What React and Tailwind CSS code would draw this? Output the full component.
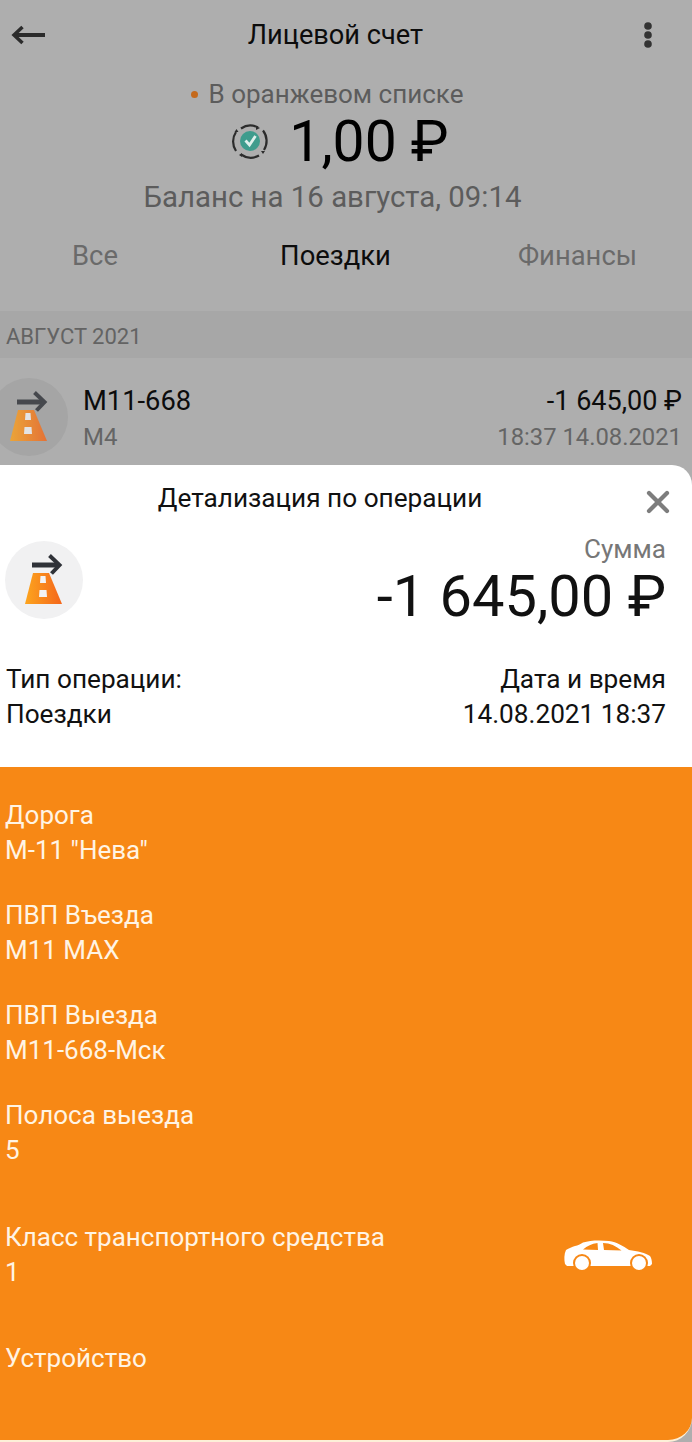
import { X } from 'lucide-react';

function RoadIcon({ id, className }) {
  return (
    <svg viewBox="0 0 78 78" className={className}>
      <defs>
        <linearGradient id={id} x1="0" y1="0" x2="1" y2="0">
          <stop offset="0" stopColor="#fda51e" />
          <stop offset="1" stopColor="#f4661b" />
        </linearGradient>
      </defs>
      <path d="M28 32h16l13 31H20z" fill={`url(#${id})`} />
      <path d="M35.500 35h5l.5 7h-6zM34.500 49h7l.5 7h-8z" fill="#f3f3f4" />
      <path d="M27 24h27" stroke="#2f3238" strokeWidth="5" fill="none" />
      <path d="M44.500 14.500 54.500 24 46.500 32.500" stroke="#2f3238" strokeWidth="4" fill="none" />
    </svg>
  );
}

function CycleCheckIcon() {
  return (
    <svg viewBox="0 0 40 40" className="w-[40px] h-[40px]">
      <g stroke="#2c2c2c" strokeWidth="2.200" fill="none">
        <path d="M11 7.500A16 16 0 0 1 28 6.500" />
        <path d="M33 9.500A17 17 0 0 1 34 29" />
        <path d="M29 34.500A17 17 0 0 1 11 33.500" />
        <path d="M6 30A17 17 0 0 1 6 11" />
      </g>
      <path d="M26 5l4 2-4 2zM35 30l-2 3-2-3zM12 32v4l-3-2zM4.500 11l2-3 2 3z" fill="#2c2c2c" />
      <circle cx="20" cy="20" r="10" fill="#3f9c8d" />
      <path d="M15.500 19.500l4 4.500 6-9" stroke="#dff0ec" strokeWidth="2.800" fill="none" />
    </svg>
  );
}

function CarIcon() {
  return (
    <svg viewBox="0 0 90 30" className="w-[90px] h-[30px]">
      <path
        fill="#fff"
        fillRule="evenodd"
        d="M2 24c-1-4-1-10 1-14 3-2 6-3 9-4 3-.5 5-1.500 8-3.500 7-2.500 18-2.500 26-1.500 8 1 14 5 20 9 8 1 17 3 21 6 1.500 2 2 5 2 8l-2 2H4zM20 9.500l15 .5-.5-7c-6 .5-10 3-14.500 6.500zM40 3l1 7 17.500 .5C53 6 47 3 40 3z"
      />
      <circle cx="19" cy="23" r="9" fill="#f78815" />
      <circle cx="76" cy="23" r="9" fill="#f78815" />
      <circle cx="19" cy="23" r="7" fill="#fff" />
      <circle cx="76" cy="23" r="7" fill="#fff" />
    </svg>
  );
}

function Field({ label, value }) {
  return (
    <div className="h-[100px] leading-[35px]">
      <div>{label}</div>
      <div>{value}</div>
    </div>
  );
}

export default function App() {
  return (
    <div className="w-[692px] h-[1442px] overflow-hidden bg-[#aeaeae] font-['Roboto',sans-serif]">
      <div className="h-[465px] overflow-hidden">
        <div className="flex items-center justify-between h-[70px] pl-[11px] pr-[39px]">
          <svg viewBox="0 0 34 20" className="w-[34px] h-[20px]">
            <path d="M3 10h31" stroke="#2b2b2b" strokeWidth="4" fill="none" />
            <path d="M11.500 2 3 10l8.500 8" stroke="#2b2b2b" strokeWidth="3.500" fill="none" />
          </svg>
          <span className="text-[27.200px] text-[#0c0c0c] mr-[17px]">Лицевой счет</span>
          <svg viewBox="0 0 10 26" className="w-[10px] h-[26px]">
            <circle cx="5" cy="4" r="3.800" fill="#333" />
            <circle cx="5" cy="13" r="3.800" fill="#333" />
            <circle cx="5" cy="22" r="3.800" fill="#333" />
          </svg>
        </div>
        <div className="flex justify-center items-center gap-[11px] h-[48px] text-[26px] text-[#5c5c5c] pr-[38px]">
          <span className="w-[7px] h-[7px] rounded-full bg-[#c4691c]" />
          <span>В оранжевом списке</span>
        </div>
        <div className="flex justify-center items-center gap-[19px] h-[46px] pr-[13px]">
          <CycleCheckIcon />
          <span className="text-[57px] leading-none text-black">1,00 ₽</span>
        </div>
        <div className="text-center text-[29.400px] leading-[40px] text-[#5c5c5c] mt-[13px] pr-[27px]">Баланс на 16 августа, 09:14</div>
        <div className="grid grid-cols-3 items-center h-[94px] text-[27.400px] text-[#6a6a6a] pb-[14px]">
          <span className="pl-[72px]">Все</span>
          <span className="text-center text-[#0c0c0c] pr-[21px]">Поездки</span>
          <span className="text-right pr-[55px]">Финансы</span>
        </div>
        <div className="h-[47px] bg-[#a7a7a7] pl-[6px] pt-[4px] flex items-center text-[22px] text-[#636363]">АВГУСТ 2021</div>
        <div className="flex justify-between items-start pt-[20px]">
          <div className="flex">
            <div className="w-[78px] h-[78px] ml-[-10px] rounded-full bg-[#a5a5a5] shrink-0">
              <RoadIcon id="road-dim" className="w-[78px] h-[78px] opacity-80" />
            </div>
            <div className="ml-[15px]">
              <div className="text-[27.300px] leading-[38px] text-[#0c0c0c] mt-[4px]">М11-668</div>
              <div className="text-[24px] leading-[34px] text-[#656565]">М4</div>
            </div>
          </div>
          <div className="text-right pr-[10px]">
            <div className="text-[27px] leading-[38px] text-[#0c0c0c] mt-[4px]">-1 645,00 ₽</div>
            <div className="text-[23.800px] leading-[34px] text-[#656565]">18:37 14.08.2021</div>
          </div>
        </div>
      </div>

      <div className="bg-white rounded-tr-[20px] h-[302px]">
        <div className="relative h-[68px] flex items-center justify-center pr-[52px]">
          <span className="text-[26.200px] text-[#111]">Детализация по операции</span>
          <X size={36} strokeWidth={2.800} className="absolute right-[16px] top-[19px] text-[#7d7d7d]" />
        </div>
        <div className="flex justify-between pl-[5px] pr-[26px]">
          <div className="w-[78px] h-[78px] rounded-full bg-[#f1f1f2] mt-[8px]">
            <RoadIcon id="road" className="w-[78px] h-[78px]" />
          </div>
          <div className="text-right">
            <div className="text-[26px] leading-[32px] text-[#777]">Сумма</div>
            <div className="text-[57.800px] leading-[63px] text-[#111]">-1 645,00 ₽</div>
          </div>
        </div>
        <div className="flex justify-between pl-[6px] pr-[26px] mt-[34px] text-[26.200px] leading-[35px] text-[#111]">
          <div>
            <div>Тип операции:</div>
            <div>Поездки</div>
          </div>
          <div className="text-right">
            <div>Дата и время</div>
            <div>14.08.2021 18:37</div>
          </div>
        </div>
      </div>

      <div className="h-[675px] bg-[#f78815] rounded-br-[24px] pl-[5px] pt-[31px] text-[26px] text-[#fff4e4] flex flex-col border-b-2 border-[#fdf0d8]">
        <Field label="Дорога" value={'М-11 "Нева"'} />
        <Field label="ПВП Въезда" value="М11 МАХ" />
        <Field label="ПВП Выезда" value="М11-668-Мск" />
        <Field label="Полоса выезда" value="5" />
        <div className="flex justify-between items-center h-[70px] mt-[22px] pr-[39px] leading-[35px]">
          <div>
            <div>Класс транспортного средства</div>
            <div>1</div>
          </div>
          <CarIcon />
        </div>
        <div className="mt-[51px] leading-[35px]">Устройство</div>
      </div>
    </div>
  );
}
